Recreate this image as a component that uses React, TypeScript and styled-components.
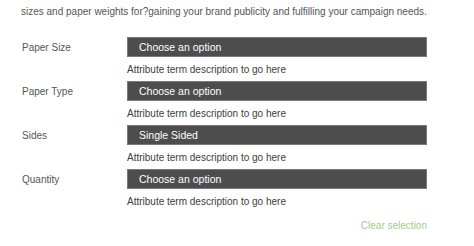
import React from 'react';
import styled, { createGlobalStyle } from 'styled-components';

const GlobalStyle = createGlobalStyle`
  html, body {
    margin: 0;
    padding: 0;
    background: #ffffff;
    overflow: hidden;
  }
  body {
    font-family: 'Liberation Sans', Arial, sans-serif;
    color: #555555;
  }
`;

const Page = styled.div`
  width: 474px;
  height: 246px;
  overflow: hidden;
  padding: 0 21px;
  box-sizing: border-box;
`;

const Intro = styled.p`
  margin: -14px 0 0;
  font-size: 10px;
  line-height: 17px;
  color: #555555;
  white-space: nowrap;
`;

const IntroLine = styled.span`
  display: block;
`;

const Form = styled.div`
  margin-top: 17px;
  display: grid;
  grid-template-columns: 106px 300px;
`;

const Label = styled.div`
  font-size: 10px;
  line-height: 20px;
  padding: 1px 0 0 1px;
  color: #555555;
`;

const Field = styled.div`
  display: flex;
  flex-direction: column;
`;

const Select = styled.div`
  height: 20px;
  box-sizing: border-box;
  background: #4d4d4d;
  border: 1px solid #7a7a7a;
  color: #ffffff;
  font-size: 10.5px;
  line-height: 19px;
  padding-left: 11px;
`;

const Description = styled.div`
  font-size: 10px;
  line-height: 22px;
  padding-top: 2px;
  color: #404040;
`;

const Footer = styled.div`
  grid-column: 2;
  text-align: right;
  font-size: 10px;
  line-height: 22px;
  padding-top: 2px;
`;

const ClearLink = styled.a`
  color: #a3c98a;
  text-decoration: none;
  cursor: pointer;
`;

const attributes = [
  { label: 'Paper Size', value: 'Choose an option' },
  { label: 'Paper Type', value: 'Choose an option' },
  { label: 'Sides', value: 'Single Sided' },
  { label: 'Quantity', value: 'Choose an option' },
];

export default function App() {
  return (
    <Page>
      <GlobalStyle />
      <Intro>
        <IntroLine>Choose from a wide range of high quality printing finishes, shapes and paper</IntroLine>
        <IntroLine>
          sizes and paper weights for?gaining your brand publicity and fulfilling your campaign needs.
        </IntroLine>
      </Intro>
      <Form>
        {attributes.map(item => (
          <React.Fragment key={item.label}>
            <Label>{item.label}</Label>
            <Field>
              <Select>{item.value}</Select>
              <Description>Attribute term description to go here</Description>
            </Field>
          </React.Fragment>
        ))}
        <Footer>
          <ClearLink>Clear selection</ClearLink>
        </Footer>
      </Form>
    </Page>
  );
}
